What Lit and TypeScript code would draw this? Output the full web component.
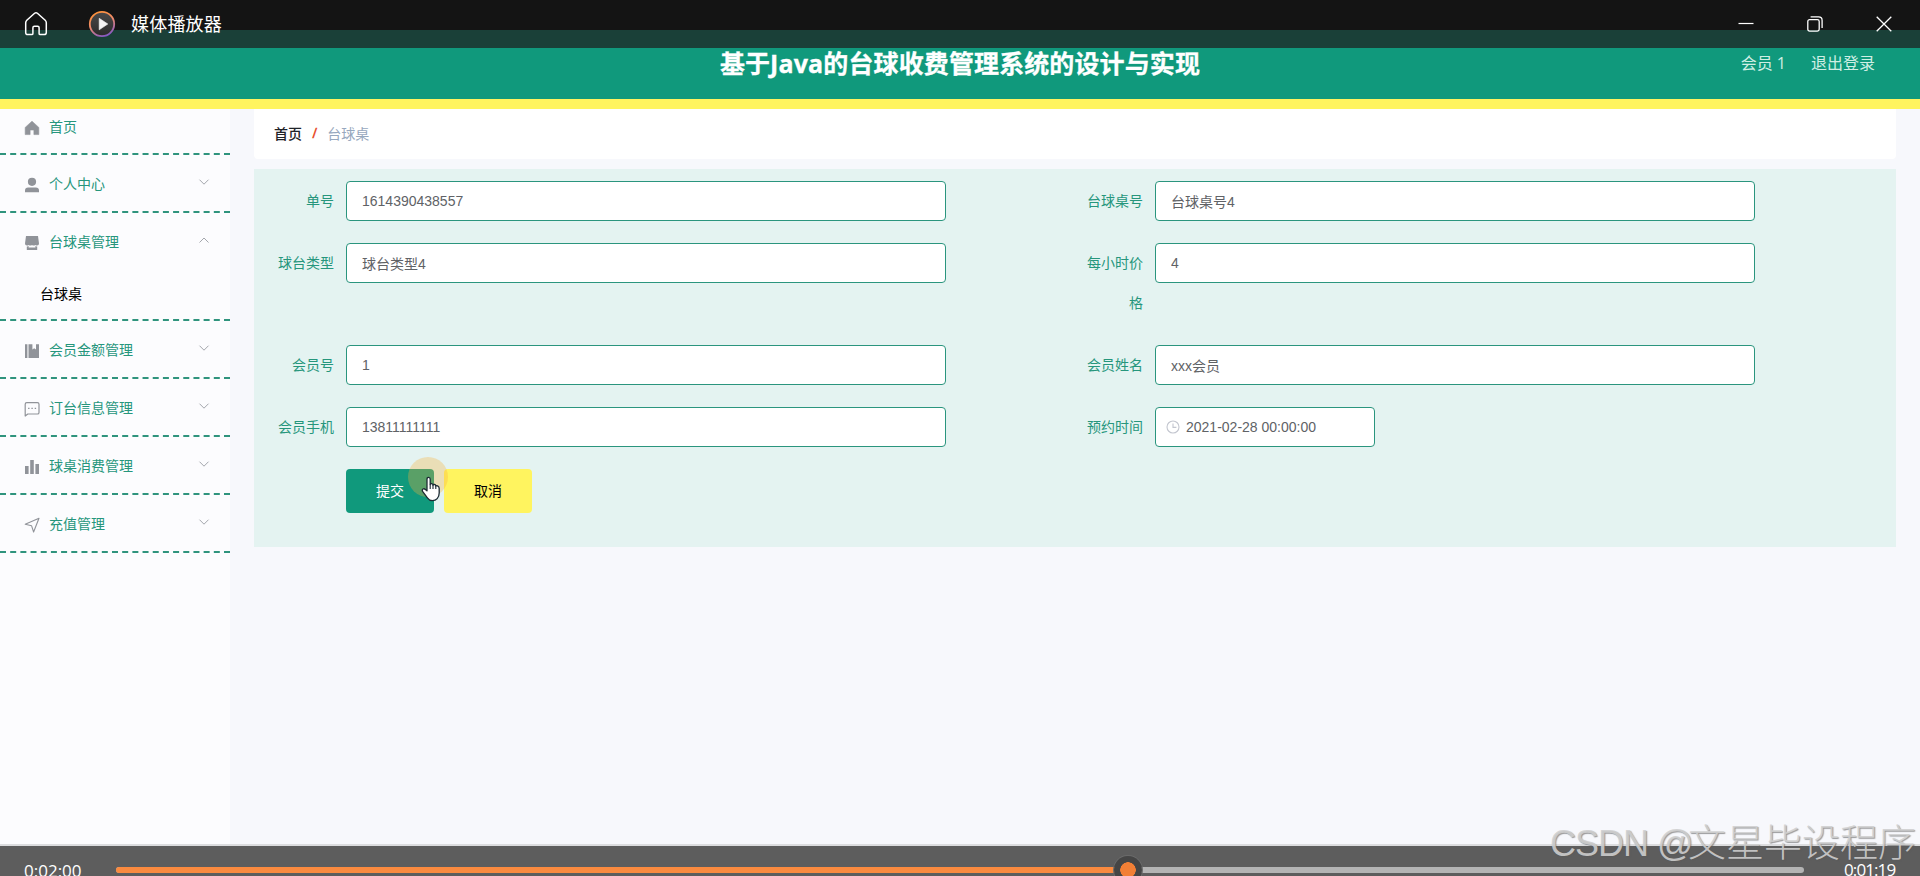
import { LitElement, html, svg, css } from "lit";
import { customElement, property } from "lit/decorators.js";

const icons: Record<string, unknown> = {
  home: svg`<path d="M8 1.2 L14.8 7.4 V14.6 H9.9 V10 H6.1 V14.6 H1.2 V7.4 Z" fill="currentColor" stroke="currentColor" stroke-width=".6" stroke-linejoin="round"/>`,
  user: svg`<circle cx="8" cy="4.8" r="4.1" fill="currentColor"/><path d="M1 15.2 V13.4 Q1 10.4 4.2 10.4 H11.8 Q15 10.4 15 13.4 V15.2 Z" fill="currentColor"/>`,
  shop: svg`<path d="M2 1 H14 L15 8.6 Q15 10.6 13.1 10.6 Q12 10.6 11.4 9.9 Q9.8 11.2 8 10.1 Q6.2 11.2 4.6 9.9 Q4 10.6 2.9 10.6 Q1 10.6 1 8.6 Z" fill="currentColor"/><path d="M2.8 11.4 Q3.8 11.6 4.6 11 V12.4 H11.4 V11 Q12.2 11.6 13.2 11.4 V15 H2.8 Z" fill="currentColor"/>`,
  book: svg`<path d="M1 1.2 H3.4 V15 H1 Z M4.5 1.2 H8.4 V6.6 L10.2 5.3 L12 6.6 V1.2 H15 V15 H4.5 Z" fill="currentColor"/>`,
  chat: svg`<path d="M1.2 15 V3.2 Q1.2 1.6 2.8 1.6 H13.4 Q15 1.6 15 3.2 V11.4 Q15 13 13.4 13 H3.8 Z" fill="none" stroke="currentColor" stroke-width="1.2" stroke-linejoin="round"/><path d="M4.1 6.7 h1.4 v1.4 h-1.4 z M7.4 6.7 h1.4 v1.4 h-1.4 z M10.7 6.7 h1.4 v1.4 h-1.4 z" fill="currentColor"/>`,
  bars: svg`<path d="M1 7 H4.6 V15 H1 Z M6.2 1 H9.8 V15 H6.2 Z M11.4 5 H15 V15 H11.4 Z" fill="currentColor"/>`,
  send: svg`<path d="M1.2 7.2 L15 1.2 L9.6 15 L7.6 8.8 Z" fill="none" stroke="currentColor" stroke-width="1.1" stroke-linejoin="round"/>`,
};

interface MenuEntry {
  label: string;
  icon: string;
  open?: boolean;
  leaf?: boolean;
  children?: string[];
}

const menu: MenuEntry[] = [
  { label: "首页", icon: "home", leaf: true },
  { label: "个人中心", icon: "user" },
  { label: "台球桌管理", icon: "shop", open: true, children: ["台球桌"] },
  { label: "会员金额管理", icon: "book" },
  { label: "订台信息管理", icon: "chat" },
  { label: "球桌消费管理", icon: "bars" },
  { label: "充值管理", icon: "send" },
];

const fields = [
  { label: "单号", value: "1614390438557" },
  { label: "台球桌号", value: "台球桌号4" },
  { label: "球台类型", value: "球台类型4" },
  { label: "每小时价格", value: "4" },
  { label: "会员号", value: "1" },
  { label: "会员姓名", value: "xxx会员" },
  { label: "会员手机", value: "13811111111" },
  { label: "预约时间", value: "2021-02-28 00:00:00", date: true },
];

@customElement("window-bar")
class WindowBar extends LitElement {
  static styles = css`
    :host { display: flex; align-items: center; height: 48px; flex: none; padding: 0 28px 0 24px; box-sizing: border-box;
      background: linear-gradient(#141414 0 30px, #1a4038 30px); color: #fff; }
    svg { display: block; }
    .home { margin-right: 40px; }
    .logo { margin-right: 15px; }
    .name { font-size: 18px; line-height: 24px; padding-top: 1px; letter-spacing: .2px; flex: 1; }
    .controls { display: flex; gap: 53px; }
  `;
  render() {
    return html`
      <svg class="home" width="24" height="26" viewBox="0 0 24 26" fill="none" stroke="#fff" stroke-width="1.5" stroke-linejoin="round">
        <path d="M10.6 2.3 Q12 1.1 13.4 2.3 L21.2 9.3 Q22.3 10.3 22.3 11.8 V21.4 Q22.3 23.6 20.1 23.6 H16.2 Q15.1 23.6 15.1 22.5 V16.8 Q15.1 15.3 13.6 15.3 H10.4 Q8.9 15.3 8.9 16.8 V22.5 Q8.9 23.6 7.8 23.6 H3.9 Q1.7 23.6 1.7 21.4 V11.8 Q1.7 10.3 2.8 9.3 Z"/>
      </svg>
      <svg class="logo" width="28" height="28" viewBox="0 0 28 28">
        <defs>
          <linearGradient id="ring" x1=".3" y1="0" x2=".7" y2="1"><stop offset="0" stop-color="#ff9138"/><stop offset=".45" stop-color="#f08c6c"/><stop offset="1" stop-color="#8257c8"/></linearGradient>
          <linearGradient id="disc" x1="0" y1="0" x2="0" y2="1"><stop offset="0" stop-color="#4a4a4a"/><stop offset="1" stop-color="#2a2a2a"/></linearGradient>
        </defs>
        <circle cx="14" cy="14" r="12.2" fill="url(#disc)" stroke="url(#ring)" stroke-width="1.8"/>
        <path d="M11.2 8.3 L19.8 14 L11.2 19.8 Z" fill="#f4f4f4" stroke="#f4f4f4" stroke-linejoin="round" stroke-width=".6"/>
      </svg>
      <span class="name">媒体播放器</span>
      <div class="controls">
        <svg width="16" height="16" viewBox="0 0 16 16"><path d="M0.5 7.5 H15.5" stroke="#fff" stroke-width="1.2"/></svg>
        <svg width="16" height="16" viewBox="0 0 16 16" fill="none" stroke="#fff" stroke-width="1.3"><rect x=".8" y="3.7" width="11.4" height="11.4" rx="1.8"/><path d="M3.6 .9 H11.6 Q15.1 .9 15.1 4.4 V12"/></svg>
        <svg width="16" height="16" viewBox="0 0 16 16"><path d="M.7 .7 L15.3 15.3 M15.3 .7 L.7 15.3" stroke="#fff" stroke-width="1.3"/></svg>
      </div>
    `;
  }
}

@customElement("side-menu")
class SideMenu extends LitElement {
  static styles = css`
    :host { display: block; width: 230px; flex: none; background: #fcfcfe; font-size: 14px; color: #26967c; }
    .item { border-bottom: 2px dashed #2f947d; }
    .row { display: flex; align-items: center; height: 56px; padding: 0 20px 0 24px; box-sizing: border-box; }
    .leaf { height: 44px; padding: 0 20px 10px 24px; }
    .icon { width: 16px; height: 16px; margin-right: 9px; color: #909399; position: relative; top: 2px; }
    .label { flex: 1; }
    .arrow { width: 12px; height: 12px; margin-top: -3px; color: #a3a6ac; }
    .child { height: 50px; line-height: 50px; padding-left: 40px; color: #000; }
  `;
  render() {
    return menu.map(
      (m) => html`
        <div class="item">
          <div class="row ${m.leaf ? "leaf" : ""}">
            <svg class="icon" viewBox="0 0 16 16">${icons[m.icon]}</svg>
            <span class="label">${m.label}</span>
            ${m.leaf
              ? ""
              : html`<svg class="arrow" viewBox="0 0 12 12" fill="none" stroke="currentColor">
                  <path d=${m.open ? "M1.5 8.5 L6 4 L10.5 8.5" : "M1.5 3.7 L6 8.2 L10.5 3.7"} />
                </svg>`}
          </div>
          ${m.children?.map((c) => html`<div class="child">${c}</div>`)}
        </div>
      `
    );
  }
}

@customElement("form-field")
class FormField extends LitElement {
  @property() label = "";
  @property() value = "";
  @property({ type: Boolean }) date = false;
  static styles = css`
    :host { display: flex; align-items: flex-start; margin-bottom: 22px; font-size: 14px; }
    .label { width: 80px; flex: none; box-sizing: border-box; padding-right: 12px; text-align: right; line-height: 40px; color: #26967c; }
    .box { display: flex; align-items: center; width: 600px; height: 40px; box-sizing: border-box; border: 1px solid #2a957e;
      border-radius: 4px; background: #fff; padding: 0 15px; }
    .date { width: 220px; padding-left: 10px; }
    .clock { width: 14px; height: 14px; margin-right: 6px; flex: none; }
    input { flex: 1; min-width: 0; border: 0; outline: 0; padding: 0; background: none; color: #606266; font: inherit; line-height: 20px; height: 38px; }
  `;
  render() {
    return html`
      <label class="label">${this.label}</label>
      <div class="box ${this.date ? "date" : ""}">
        ${this.date
          ? html`<svg class="clock" viewBox="0 0 14 14" fill="none" stroke="#c3c6cf" stroke-width="1.1"><circle cx="7" cy="7" r="6" /><path d="M7 3.4 V7.4 H10.4" /></svg>`
          : ""}
        <input .value=${this.value} />
      </div>
    `;
  }
}

@customElement("player-bar")
class PlayerBar extends LitElement {
  static styles = css`
    :host { display: flex; height: 32px; flex: none; box-sizing: border-box; border-top: 2px solid #dcdddf; background: #5d5d5d;
      overflow: hidden; font: 17px/24px "Open Sans", sans-serif; color: #fff; }
    .time { width: 116px; padding: 13px 0 0 24px; box-sizing: border-box; height: 40px; flex: none; }
    .total { width: 76px; letter-spacing: -.9px; margin-left: 40px; padding-left: 0; padding-top: 12px; }
    .track { flex: 1; display: flex; align-items: center; height: 6px; margin-top: 21px; border-radius: 3px; background: #b4b4b4; }
    .played { height: 6px; border-radius: 3px 0 0 3px; background: #fa8a3f; }
    .knob { width: 28px; height: 28px; margin-left: -14px; border-radius: 50%; flex: none; box-sizing: border-box;
      background: radial-gradient(circle, #f27f35 7.5px, #454545 8px); box-shadow: 0 0 0 1px #6b6b6b; }
  `;
  render() {
    return html`
      <span class="time">0:02:00</span>
      <div class="track"><div class="played" style="width:${(1012 / 1688) * 100}%"></div><div class="knob"></div></div>
      <span class="time total">0:01:19</span>
    `;
  }
}

@customElement("app-root")
class AppRoot extends LitElement {
  static styles = css`
    :host { display: flex; flex-direction: column; position: relative; height: 876px; overflow: hidden; background: #f7f8fc;
      font-family: "Liberation Sans", "Noto Sans CJK SC", sans-serif; }
    .header { display: grid; grid-template-columns: 1fr auto 1fr; align-items: center; height: 61px; flex: none; box-sizing: border-box;
      padding: 0 45px 21px; background: #10997c; border-bottom: 10px solid #fff45f; color: #fff; }
    .title { grid-column: 2; font: bold 25px/30px "Open Sans", "Noto Sans CJK SC", sans-serif; letter-spacing: .12px; -webkit-text-stroke: .3px #fff; }
    .account { display: flex; justify-content: flex-end; gap: 25px; font: 16px/24px "Open Sans", "Noto Sans CJK SC", sans-serif; color: #cfeee4; }
    .body { display: flex; flex: 1; min-height: 0; }
    .main { flex: 1; padding: 0 24px; }
    .crumbs { display: flex; align-items: center; gap: 10px; height: 50px; box-sizing: border-box; padding: 0 20px 2px; background: #fff;
      border-radius: 0 0 4px 4px; font-size: 14px; color: #97a8be; }
    .here { color: #1f2329; font-weight: 500; }
    .slash { color: #e8502e; font-weight: 700; padding: 0 .7px; transform: skewX(-9deg); }
    .panel { margin-top: 10px; height: 378px; box-sizing: border-box; padding: 12px; background: #e4f3f1; }
    .grid { display: grid; grid-template-columns: 1fr 1fr; }
    .actions { display: flex; gap: 10px; padding-left: 80px; }
    .btn { width: 88px; height: 44px; border: 0; border-radius: 4px; padding: 0 0 2px; font: 14px "Noto Sans CJK SC", sans-serif; }
    .submit { background: #10997c; color: #fff; }
    .cancel { background: #fff45f; color: #000; }
    .halo { position: absolute; left: 408px; top: 457px; width: 40px; height: 40px; border-radius: 50%; background: rgba(250, 176, 60, .32); }
    .hand { position: absolute; left: 421px; top: 476px; }
    .mark { position: absolute; left: 1550px; top: 812px; display: flex; align-items: baseline; white-space: nowrap; font: 300 38px/56px "Noto Sans CJK SC", sans-serif;
      color: rgba(208, 208, 208, .88); text-shadow: 1px 1px 1px rgba(90, 90, 90, .6); }
    .latin { width: 138px; font: 36px/56px "Liberation Sans", sans-serif; letter-spacing: -1px; }
  `;
  render() {
    return html`
      <window-bar></window-bar>
      <header class="header">
        <span class="title">基于Java的台球收费管理系统的设计与实现</span>
        <div class="account"><span>会员 1</span><span>退出登录</span></div>
      </header>
      <div class="body">
        <side-menu></side-menu>
        <main class="main">
          <nav class="crumbs"><span class="here">首页</span><span class="slash">/</span><span>台球桌</span></nav>
          <section class="panel">
            <div class="grid">
              ${fields.map((f) => html`<form-field .label=${f.label} .value=${f.value} .date=${!!f.date}></form-field>`)}
            </div>
            <div class="actions">
              <button class="btn submit">提交</button>
              <button class="btn cancel">取消</button>
            </div>
          </section>
        </main>
      </div>
      <player-bar></player-bar>
      <div class="halo"></div>
      <svg class="hand" width="20" height="26" viewBox="0 0 20 26">
        <path d="M6 14.8 V3.2 Q6 1.3 7.6 1.3 Q9.2 1.3 9.2 3.2 V8.6 Q9.4 7.4 10.8 7.6 Q12 7.8 12 9.2 Q12.4 8.2 13.6 8.5 Q14.8 8.8 14.8 10.1 Q15.4 9.4 16.6 9.9 Q18.2 10.6 18.2 12.6 V17 Q18.2 20.4 16.2 22.6 Q14.4 24.6 11.4 24.6 Q8.4 24.6 6.4 21.8 L1.6 15.4 Q.8 13.8 2 13 Q3.2 12.4 4.4 13.4 Z" fill="#fff" stroke="#1c2a33" stroke-width="1.3" stroke-linejoin="round"/>
        <path d="M9.2 8.4 V13 M12 9 V13 M14.8 10 V13" stroke="#1c2a33" stroke-width="1.1"/>
      </svg>
      <div class="mark"><span class="latin">CSDN @</span><span>文星毕设程序</span></div>
    `;
  }
}
